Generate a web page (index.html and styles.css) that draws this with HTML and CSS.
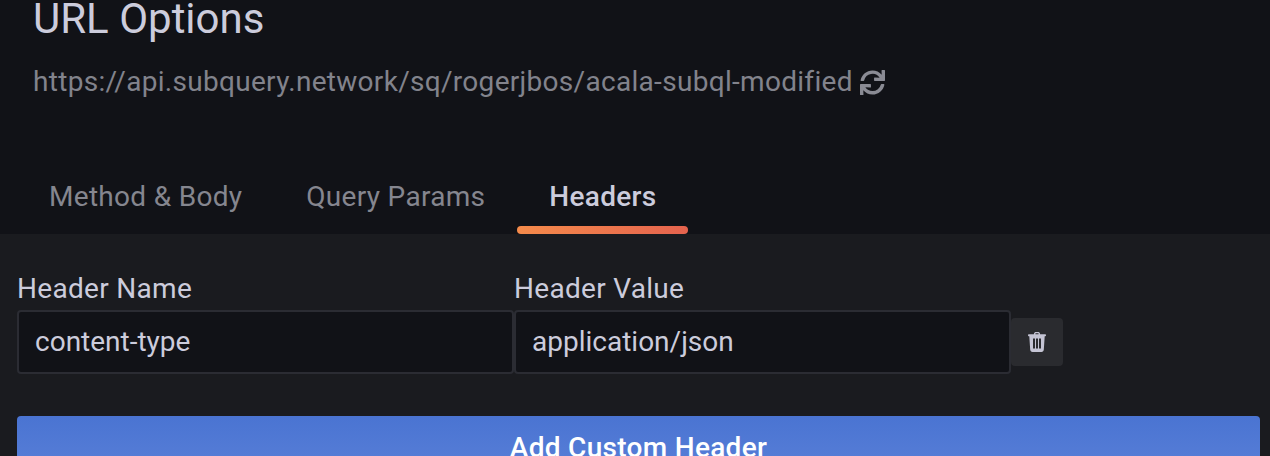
FILE: index.html
```html
<!DOCTYPE html>
<html lang="en">
<head>
<meta charset="utf-8">
<title>URL Options</title>
<link rel="stylesheet" href="styles.css">
</head>
<body>
<header class="top">
  <h2 class="title">URL Options</h2>
  <div class="url">
    <span>https://api.subquery.network/sq/rogerjbos/acala-subql-modified</span>
    <svg class="sync" viewBox="0 0 512 512"><path fill="currentColor" d="M440.65 12.57l4 82.77A247.16 247.16 0 0 0 255.83 8C134.73 8 33.91 94.92 12.29 209.82A12 12 0 0 0 24.09 224h49.05a12 12 0 0 0 11.67-9.26 175.91 175.91 0 0 1 317-56.94l-101.46-4.86a12 12 0 0 0-12.57 12v47.41a12 12 0 0 0 12 12H500a12 12 0 0 0 12-12V12a12 12 0 0 0-12-12h-47.37a12 12 0 0 0-11.98 12.57zM255.83 432a175.61 175.61 0 0 1-146-77.8l101.8 4.87a12 12 0 0 0 12.57-12v-47.4a12 12 0 0 0-12-12H12a12 12 0 0 0-12 12V500a12 12 0 0 0 12 12h47.35a12 12 0 0 0 12-12.6l-4.15-82.57A247.17 247.17 0 0 0 255.83 504c121.11 0 221.93-86.92 243.55-201.82a12 12 0 0 0-11.8-14.18h-49.05a12 12 0 0 0-11.67 9.26A175.86 175.86 0 0 1 255.83 432z"/></svg>
  </div>
  <nav class="tabs">
    <div class="tab">Method &amp; Body</div>
    <div class="tab">Query Params</div>
    <div class="tab active">Headers</div>
  </nav>
</header>
<main class="panel">
  <div class="row">
    <div class="field">
      <label class="label">Header Name</label>
      <div class="input">content-type</div>
    </div>
    <div class="field">
      <label class="label">Header Value</label>
      <div class="input">application/json</div>
    </div>
    <button class="del" type="button" aria-label="Delete">
      <svg class="trash" viewBox="0 0 18 20">
        <path fill="currentColor" fill-rule="evenodd" d="M6 1.6C6.2.7 6.9 0 7.8 0h2.4c.9 0 1.600.7 1.800 1.600l.1.600H17c.6 0 1 .4 1 1s-.4 1-1 1h-.3l-.9 13.600c-.1 1.200-1 2.200-2.200 2.200H4.400c-1.200 0-2.100-1-2.200-2.200L1.300 4.200H1c-.6 0-1-.4-1-1s.4-1 1-1h4.900zM7.500 1.500l-.1.700h3.200l-.1-.700c0-.1-.1-.2-.3-.2H7.800c-.2 0-.3.1-.3.200zM5 6.500v10h2v-10zM8 6.500v10h2v-10zM11 6.500v10h2v-10z"/>
      </svg>
    </button>
  </div>
  <button class="add" type="button">Add Custom Header</button>
</main>
</body>
</html>
```
FILE: styles.css
```css
* { box-sizing: border-box; }
html, body { margin: 0; height: 456px; overflow: hidden; }
body {
  background: #111217;
  font-family: Roboto, "Liberation Sans", sans-serif;
  color: #ccccdc;
}
.top { height: 234px; display: flex; flex-direction: column; }
.title {
  margin: -7px 0 0 33px;
  font-size: 42px;
  line-height: 52px;
  font-weight: 400;
  color: #ccccdc;
}
.url {
  margin: 18px 0 0 33px;
  display: flex;
  align-items: center;
  gap: 7px;
  font-size: 28px;
  letter-spacing: 0.3px;
  line-height: 38px;
  color: #82838c;
}
.sync { width: 25px; height: 25px; color: #8a8b94; }
.tabs { margin-top: auto; padding-left: 17px; display: flex; height: 76px; }
.tab {
  position: relative;
  padding: 0 32px;
  font-size: 28px;
  letter-spacing: 0.3px;
  line-height: 78px;
  color: #85868f;
}
.tab.active { color: #ccccdc; font-weight: 500; }
.tab.active::after {
  content: "";
  position: absolute;
  left: 0; right: 0; bottom: 0;
  height: 8px;
  border-radius: 4px;
  background: linear-gradient(90deg, #f58b4b, #e5634e);
}
.panel { background: #1a1b1f; height: 222px; padding: 34px 10px 0 17px; }
.row { display: flex; align-items: flex-end; }
.field { width: 497px; }
.label { display: block; font-size: 28px; letter-spacing: 0.3px; line-height: 42px; height: 42px; color: #ccccdc; }
.input {
  height: 64px;
  padding: 0 16px;
  border: 2px solid #2b2c33;
  border-radius: 4px;
  background: #111217;
  font-size: 28px;
  line-height: 60px;
  color: #ccccdc;
}
.del {
  width: 52px;
  height: 48px;
  margin-bottom: 8px;
  padding: 0;
  border: 0;
  border-radius: 4px;
  background: #2a2b2f;
  color: #c4c4d4;
  display: flex;
  align-items: center;
  justify-content: center;
}
.trash { width: 18px; height: 20px; }
.add {
  display: block;
  width: 100%;
  height: 64px;
  margin-top: 42px;
  padding: 0;
  border: 0;
  border-radius: 4px;
  background: linear-gradient(180deg, #4a74d2, #5a80d8);
  color: #fff;
  font-family: inherit;
  font-size: 28px;
  letter-spacing: 0.3px;
  font-weight: 500;
  line-height: 60px;
}
```
